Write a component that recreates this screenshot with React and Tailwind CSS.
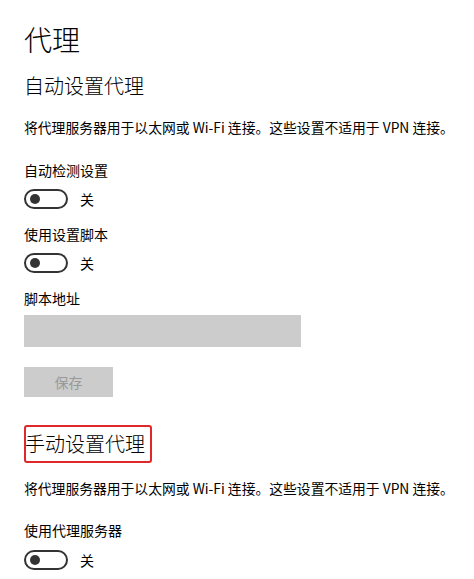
import React from "react";

function Toggle() {
  return (
    <div className="flex items-center">
      <div className="flex h-[20px] w-[44px] items-center rounded-full border-2 border-[#333333] pl-[4px]">
        <div className="h-[10px] w-[10px] rounded-full bg-[#333333]" />
      </div>
      <span className="ml-[12px] text-[14px] leading-[20px] text-black">关</span>
    </div>
  );
}

export default function App() {
  const desc = "将代理服务器用于以太网或 Wi-Fi 连接。这些设置不适用于 VPN 连接。";
  return (
    <div
      className="min-h-[579px] w-[474px] bg-white pl-[24px] pt-[19px] text-black"
      style={{ fontFamily: '"Noto Sans CJK SC", "Noto Sans", sans-serif' }}
    >
      <h1 className="text-[28px] font-light leading-[40px]">代理</h1>
      <h2 className="mt-[13px] text-[20px] font-light leading-[28px]">自动设置代理</h2>
      <p className="mt-[17px] whitespace-nowrap text-[13.8px] leading-[20px]">{desc}</p>

      <div className="mt-[23px] text-[14px] leading-[20px]">自动检测设置</div>
      <div className="mt-[9px]">
        <Toggle />
      </div>

      <div className="mt-[15px] text-[14px] leading-[20px]">使用设置脚本</div>
      <div className="mt-[9px]">
        <Toggle />
      </div>

      <div className="mt-[15px] text-[14px] leading-[20px]">脚本地址</div>
      <div className="mt-[7px] h-[32px] w-[277px] bg-[#cccccc]" />

      <button className="mt-[20px] flex h-[30px] w-[89px] items-center justify-center bg-[#cccccc] text-[14px] text-[#999999]">
        保存
      </button>

      <div className="mt-[28px] flex h-[38px] w-[128px] items-center rounded-[3px] border-2 border-[#e0282a]">
        <span className="-ml-[1px] whitespace-nowrap text-[20px] font-light leading-[28px]">手动设置代理</span>
      </div>
      <p className="mt-[15px] whitespace-nowrap text-[13.8px] leading-[20px]">{desc}</p>

      <div className="mt-[22px] text-[14px] leading-[20px]">使用代理服务器</div>
      <div className="mt-[10px]">
        <Toggle />
      </div>
    </div>
  );
}
